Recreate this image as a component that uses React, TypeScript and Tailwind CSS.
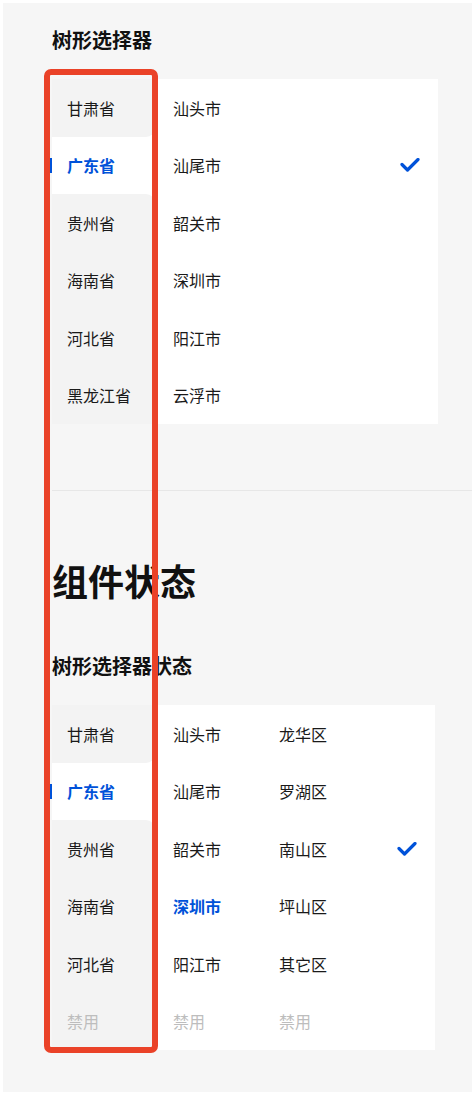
import React from "react";

const BLUE = "#0052d9";

function Check() {
  return (
    <svg width="20" height="14" viewBox="0 0 20 14" fill="none">
      <path d="M2 6.5 L7.5 12 L18 1.5" stroke={BLUE} strokeWidth="3.2" strokeLinecap="round" strokeLinejoin="round" />
    </svg>
  );
}

function Nav({ items, active, disabledLast }: { items: string[]; active: number; disabledLast?: boolean }) {
  return (
    <div className="flex w-[103px] shrink-0 flex-col bg-white">
      {items.map((t, i) => {
        const isActive = i === active;
        const disabled = disabledLast && i === items.length - 1;
        let cls = "relative flex h-[57.5px] items-center pl-[15px] text-[16px] ";
        if (isActive) cls += "bg-white font-bold text-[#0052d9]";
        else {
          cls += "bg-[#f3f3f3] ";
          cls += disabled ? "text-[#bdbdbd] " : "text-[#1a1a1a] ";
          if (i === active - 1) cls += "rounded-br-[9px]";
          if (i === active + 1) cls += "rounded-tr-[9px]";
        }
        return (
          <div key={i} className={cls}>
            {isActive && <span className="absolute left-[-3px] top-[21px] h-[15px] w-[3px] bg-[#0052d9]" />}
            {t}
          </div>
        );
      })}
    </div>
  );
}

type Item = { t: string; active?: boolean; checked?: boolean; disabled?: boolean };

function Col({ items, className }: { items: Item[]; className: string }) {
  return (
    <div className={"flex flex-col " + className}>
      {items.map((it, i) => (
        <div
          key={i}
          className={
            "flex h-[57.5px] items-center justify-between pl-[18px] pr-[18px] text-[16px] " +
            (it.active ? "font-bold text-[#0052d9]" : it.disabled ? "text-[#bdbdbd]" : "text-[#1a1a1a]")
          }
        >
          <span>{it.t}</span>
          {it.checked && <Check />}
        </div>
      ))}
    </div>
  );
}

export default function App() {
  const font = "font-['Noto_Sans_CJK_SC','Noto_Sans',sans-serif]";
  return (
    <div className={"relative bg-white pb-[4px] pl-[3px] pr-[2px] pt-[3px] " + font}>
      <div className="min-h-[1089px] bg-[#f6f6f6] pl-[49px] pt-[23px]">
        <h2 className="text-[20px] font-bold leading-[28px] text-[#111]">树形选择器</h2>
        <div className="mt-[25px] flex w-[386px] bg-white">
          <Nav items={["甘肃省", "广东省", "贵州省", "海南省", "河北省", "黑龙江省"]} active={1} />
          <Col
            className="flex-1"
            items={[
              { t: "汕头市" },
              { t: "汕尾市", checked: true },
              { t: "韶关市" },
              { t: "深圳市" },
              { t: "阳江市" },
              { t: "云浮市" },
            ]}
          />
        </div>

        <div className="mt-[66px] h-px bg-[#e7e7e7]" />

        <h1 className="mt-[65px] text-[36px] font-bold leading-[48px] text-[#111]">组件状态</h1>
        <h2 className="mt-[48px] text-[20px] font-bold leading-[28px] text-[#111]">树形选择器状态</h2>

        <div className="mt-[25px] flex w-[383px] bg-white">
          <Nav items={["甘肃省", "广东省", "贵州省", "海南省", "河北省", "禁用"]} active={1} disabledLast />
          <Col
            className="w-[106px] shrink-0"
            items={[
              { t: "汕头市" },
              { t: "汕尾市" },
              { t: "韶关市" },
              { t: "深圳市", active: true },
              { t: "阳江市" },
              { t: "禁用", disabled: true },
            ]}
          />
          <Col
            className="flex-1"
            items={[
              { t: "龙华区" },
              { t: "罗湖区" },
              { t: "南山区", checked: true },
              { t: "坪山区" },
              { t: "其它区" },
              { t: "禁用", disabled: true },
            ]}
          />
        </div>
      </div>

      <div className="pointer-events-none absolute left-[44px] top-[69px] h-[984px] w-[114px] rounded-[7px] border-[6px] border-[#ea4228]" />
    </div>
  );
}
